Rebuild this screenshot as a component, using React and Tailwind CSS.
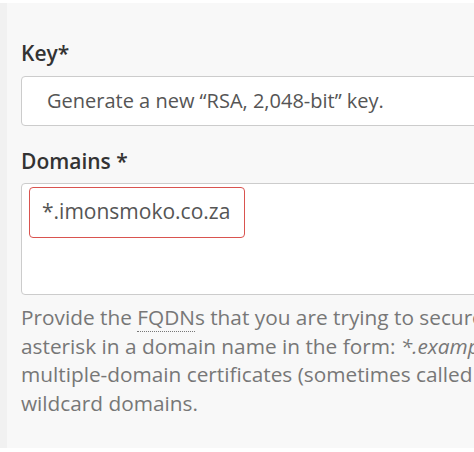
import React from "react";

export default function App() {
  return (
    <div
      className="w-[474px] h-[452px] overflow-hidden bg-white flex flex-col"
      style={{ fontFamily: '"Open Sans", "Noto Sans", sans-serif' }}
    >
      <div className="flex flex-1 pt-[3px] pb-[4px]">
        <div className="w-[7px] bg-[#f1f1f1]" />
        <div className="flex-1 bg-[#f8f8f8] pl-[14px] pt-[37px] overflow-hidden">
          {/* Key */}
          <label className="block text-[21px] leading-[26px] font-semibold text-[#333]">
            Key*
          </label>
          <div className="mt-[10px] w-[520px] h-[50px] bg-white border border-[#ccc] rounded-[4px] flex items-center pl-[25px] text-[20px] text-[#555]">
            Generate a new “RSA, 2,048-bit” key.
          </div>

          {/* Domains */}
          <label className="block mt-[22px] text-[21px] leading-[26px] font-semibold text-[#333]">
            Domains *
          </label>
          <div className="mt-[9px] w-[520px] h-[112px] bg-white border border-[#ccc] rounded-[4px] p-[3px] pl-[7px]">
            <div className="inline-flex items-center w-[216px] h-[51px] border border-[#d9534f] rounded-[4px] pl-[12px] pb-[2px] text-[21px] text-[#555]">
              *.imonsmoko.co.za
            </div>
          </div>

          {/* Help text */}
          <div className="mt-[8px] text-[20.8px] leading-[28.5px] text-[#777] whitespace-nowrap">
            <div>
              Provide the{" "}
              <abbr
                title="Fully Qualified Domain Names"
                className="no-underline border-b border-dotted border-[#777]"
              >
                FQDN
              </abbr>
              s that you are trying to secure, one per line.
            </div>
            <div>
              asterisk in a domain name in the form: <em>*.example.com</em>.
            </div>
            <div>multiple-domain certificates (sometimes called “UCC”</div>
            <div>wildcard domains.</div>
          </div>
        </div>
      </div>
    </div>
  );
}
